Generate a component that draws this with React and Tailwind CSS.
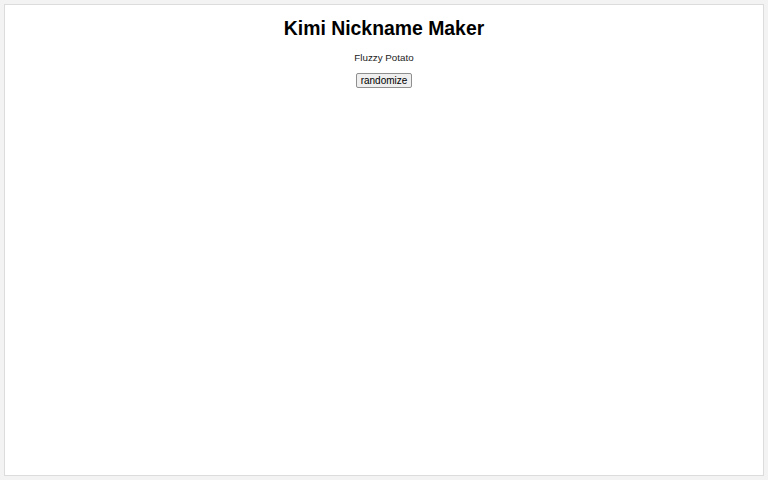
export default function App() {
  return (
    <div className="h-[480px] w-[768px] bg-[#f3f3f3] p-[4px]">
      <div
        className="h-full bg-white border border-[#dcdcdc] flex flex-col items-center pt-[11px]"
        style={{ fontFamily: "'Liberation Sans', Arial, sans-serif" }}
      >
        <h1 className="text-[19.4px] leading-[24px] font-bold text-black">
          Kimi Nickname Maker
        </h1>

        <p className="mt-[12px] text-[9.8px] leading-[12px] text-[#222]">
          Fluzzy Potato
        </p>

        <button className="mt-[9px] px-[4px] h-[15px] text-[10px] leading-[12px] text-black bg-[#efefef] border border-[#8f8f8f] rounded-[2px]">
          randomize
        </button>
      </div>
    </div>
  )
}
